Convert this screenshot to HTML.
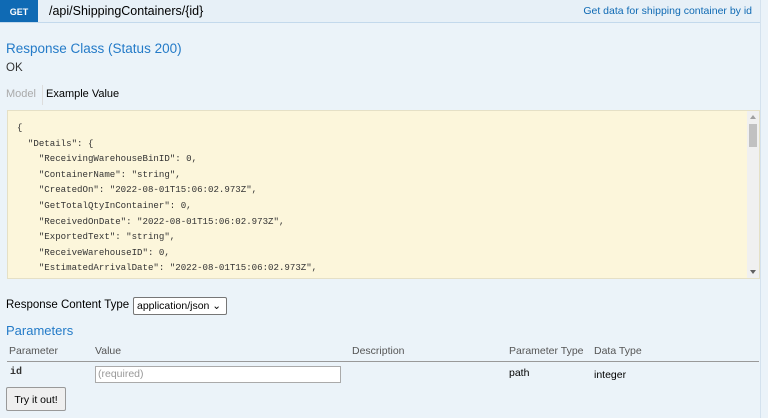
<!DOCTYPE html>
<html><head><style>
body{margin:0;width:768px;height:418px;background:#ebf3f9;font-family:"Liberation Sans",sans-serif;position:relative;overflow:hidden;color:#333}
.hdr{position:absolute;left:0;top:0;width:760px;height:22px;background:#e7f0f7;border-bottom:1px solid #c3d9ec}
.get{position:absolute;left:0;top:0;width:38px;height:22px;background:#0f6ab4;color:#fff;font-size:9px;font-weight:bold;line-height:24px;text-align:center}
.path{position:absolute;left:49px;top:4px;font-size:12.5px;color:#000}
.sum{position:absolute;right:8px;top:5px;font-size:10.5px;color:#0f6ab4}
.edge{position:absolute;left:760px;top:0;width:1px;height:418px;background:#d4e2ee}
.t{position:absolute;white-space:nowrap}
.code{position:absolute;left:7px;top:110px;width:751px;height:167px;background:#fcf6db;border:1px solid #e5e0c6;overflow:hidden}
.code pre{margin:0;padding:9px 9px;font-family:"Liberation Mono",monospace;font-size:9.1px;line-height:15.6px;color:#333}
.sb{position:absolute;right:0;top:0;width:12px;height:167px;background:#f0f0f0}
.thumb{position:absolute;right:2px;top:13px;width:8px;height:23px;background:#c1c1c1}
</style></head><body>
<div class="hdr"><div class="get">GET</div><div class="path">/api/ShippingContainers/{id}</div><div class="sum">Get data for shipping container by id</div></div>
<div class="edge"></div>
<div class="t" style="left:6px;top:41px;font-size:13.5px;color:#247bc8">Response Class (Status 200)</div>
<div class="t" style="left:6px;top:62px;font-size:11.5px">OK</div>
<div class="t" style="left:6px;top:88px;font-size:11px;color:#aaa">Model</div>
<div style="position:absolute;left:42px;top:85px;width:1px;height:20px;background:#ddd"></div>
<div class="t" style="left:46px;top:88px;font-size:11px;color:#000">Example Value</div>
<div class="code"><pre>{
  "Details": {
    "ReceivingWarehouseBinID": 0,
    "ContainerName": "string",
    "CreatedOn": "2022-08-01T15:06:02.973Z",
    "GetTotalQtyInContainer": 0,
    "ReceivedOnDate": "2022-08-01T15:06:02.973Z",
    "ExportedText": "string",
    "ReceiveWarehouseID": 0,
    "EstimatedArrivalDate": "2022-08-01T15:06:02.973Z",
    "ID": 0,</pre><div class="sb"><div class="thumb"></div><div style="position:absolute;left:3px;top:4px;border:3px solid transparent;border-bottom:4px solid #a0a0a0;border-top:0"></div><div style="position:absolute;left:3px;bottom:4px;border:3px solid transparent;border-top:4px solid #606060;border-bottom:0"></div></div></div>
<div class="t" style="left:6px;top:299px;font-size:11.5px;color:#000">Response Content Type</div>
<div style="position:absolute;left:133px;top:297px;border:1px solid #767676;border-radius:2px;background:#fff;font-size:10.5px;line-height:16px;padding-left:3px;box-sizing:border-box;width:94px;height:18px;color:#000">application/json &#x2304;</div>
<div class="t" style="left:6px;top:323px;font-size:13px;color:#247bc8">Parameters</div>
<div class="t" style="left:9px;top:345px;font-size:10.5px;color:#555">Parameter</div>
<div class="t" style="left:95px;top:345px;font-size:10.5px;color:#555">Value</div>
<div class="t" style="left:352px;top:345px;font-size:10.5px;color:#555">Description</div>
<div class="t" style="left:509px;top:345px;font-size:10.5px;color:#555">Parameter Type</div>
<div class="t" style="left:594px;top:345px;font-size:10.5px;color:#555">Data Type</div>
<div style="position:absolute;left:7px;top:361px;width:752px;height:1px;background:#999"></div>
<div class="t" style="left:10px;top:367px;font-size:10px;font-family:'Liberation Mono',monospace;font-weight:bold">id</div>
<div style="position:absolute;left:95px;top:366px;border:1px solid #aaa;background:#fff;box-sizing:border-box;font-size:10.5px;color:#999;padding-left:2px;line-height:15px;width:246px;height:17px">(required)</div>
<div class="t" style="left:509px;top:367px;font-size:10.5px;color:#000">path</div>
<div class="t" style="left:594px;top:369px;font-size:10.5px;color:#000">integer</div>
<div style="position:absolute;left:6px;top:387px;width:60px;height:24px;border:1px solid #999;border-radius:2px;background:#efefef;font-size:10.5px;line-height:24px;text-align:center;color:#000;box-sizing:border-box">Try it out!</div>
</body></html>
